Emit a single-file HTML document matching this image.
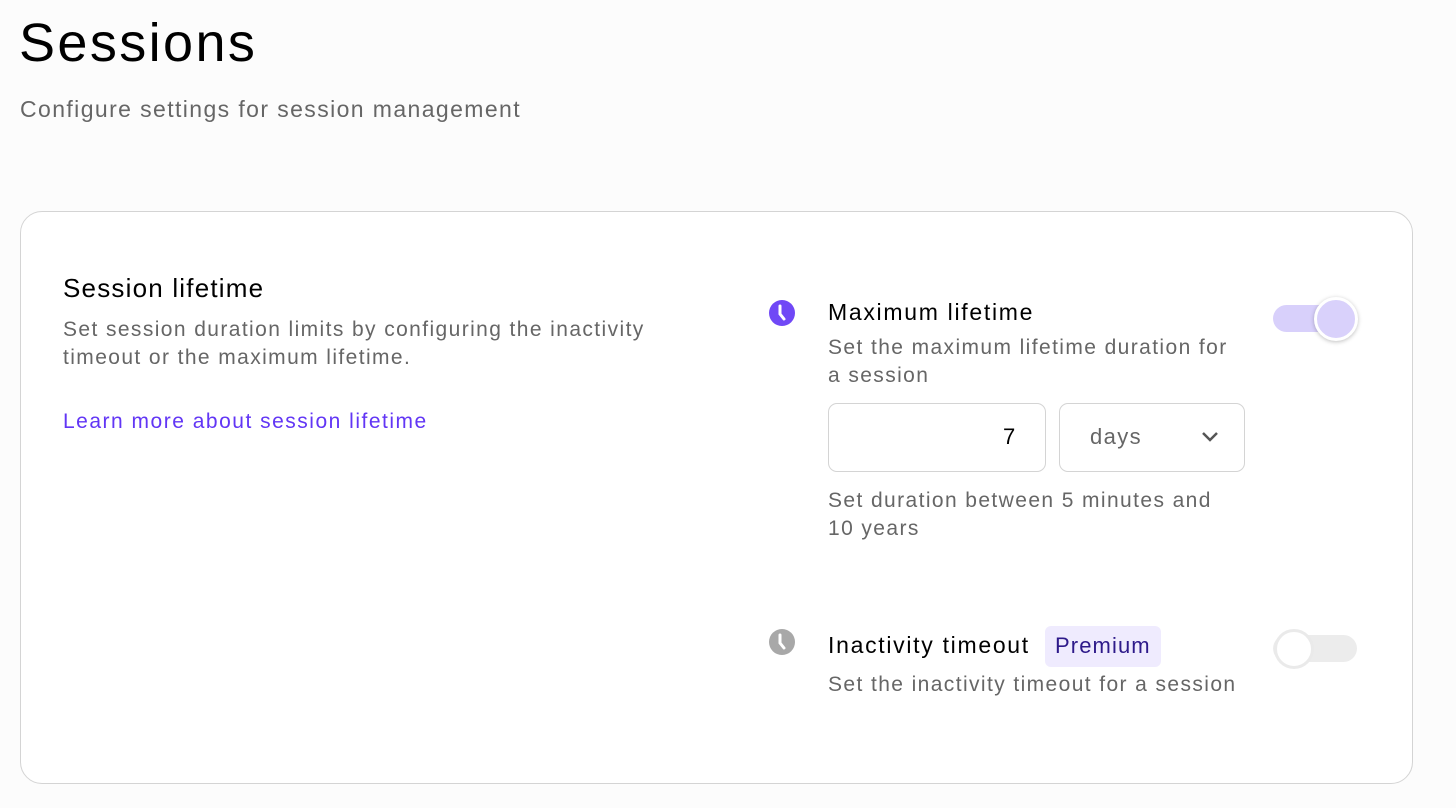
<!DOCTYPE html>
<html><head><style>
body{margin:0;width:1456px;height:808px;background:#fcfcfc;font-family:"Liberation Sans",sans-serif;position:relative;overflow:hidden;color:#000}
.a{position:absolute;white-space:nowrap}
.g{color:#666}
.s{letter-spacing:1.4px}
</style></head><body>
<div class="a" style="left:19px;top:10px;font-size:54px;line-height:66px;letter-spacing:2.4px">Sessions</div>
<div class="a g s" style="left:20px;top:95px;font-size:23px;line-height:28px">Configure settings for session management</div>
<div class="a" style="left:20px;top:211px;width:1391px;height:571px;border:1.5px solid #d4d4d4;border-radius:22px;background:#fff"></div>
<div class="a" style="left:63px;top:273px;font-size:26px;line-height:30px;letter-spacing:1.2px">Session lifetime</div>
<div class="a g s" style="left:63px;top:316px;font-size:21px;line-height:28px">Set session duration limits by configuring the inactivity<br>timeout or the maximum lifetime.</div>
<div class="a" style="left:63px;top:408px;font-size:21px;line-height:28px;color:#6236f5;letter-spacing:1.5px">Learn more about session lifetime</div>

<svg class="a" style="left:768px;top:299px" width="28" height="28" viewBox="0 0 28 28"><circle cx="14" cy="14" r="13" fill="#7048f6"/><path d="M12 7v8l4 5" stroke="#fff" stroke-width="3" fill="none" stroke-linecap="round"/></svg>
<div class="a" style="left:828px;top:298px;font-size:23px;line-height:28px;letter-spacing:1.7px">Maximum lifetime</div>
<div class="a g s" style="left:828px;top:334px;font-size:21px;line-height:28px">Set the maximum lifetime duration for<br>a session</div>
<div class="a" style="left:1273px;top:305px;width:82px;height:27px;border-radius:14px;background:#d8d0fb"></div>
<div class="a" style="left:1314px;top:297px;width:38px;height:38px;border-radius:50%;background:#d9d1fb;border:3px solid #fff;box-shadow:0 1px 4px rgba(0,0,0,.25)"></div>
<div class="a" style="left:828px;top:403px;width:216px;height:67px;border:1.5px solid #d4d4d4;border-radius:9px;background:#fff"></div>
<div class="a" style="left:1003px;top:424px;font-size:22px">7</div>
<div class="a" style="left:1059px;top:403px;width:184px;height:67px;border:1.5px solid #d4d4d4;border-radius:9px;background:#fff"></div>
<div class="a g" style="left:1090px;top:424px;font-size:22px;letter-spacing:1.4px">days</div>
<svg class="a" style="left:1201px;top:431px" width="18" height="12"><path d="M2 2l7 7 7-7" stroke="#555" stroke-width="2.5" fill="none"/></svg>
<div class="a g s" style="left:828px;top:487px;font-size:21px;line-height:28px">Set duration between 5 minutes and<br>10 years</div>

<svg class="a" style="left:768px;top:628px" width="28" height="28" viewBox="0 0 28 28"><circle cx="14" cy="14" r="13" fill="#a8a8a8"/><path d="M12 7v8l4 5" stroke="#fff" stroke-width="3" fill="none" stroke-linecap="round"/></svg>
<div class="a" style="left:828px;top:631px;font-size:23px;line-height:28px;letter-spacing:1.7px">Inactivity timeout</div>
<div class="a" style="left:1045px;top:626px;width:116px;height:41px;border-radius:6px;background:#efebfe"></div>
<div class="a" style="left:1055px;top:633px;font-size:22px;color:#2e1a8a;letter-spacing:1.1px">Premium</div>
<div class="a g s" style="left:828px;top:671px;font-size:21px;line-height:28px">Set the inactivity timeout for a session</div>
<div class="a" style="left:1273px;top:635px;width:84px;height:27px;border-radius:14px;background:#ececec"></div>
<div class="a" style="left:1274px;top:629px;width:34px;height:34px;border-radius:50%;background:#fff;border:3px solid #eaeaea"></div>
</body></html>
